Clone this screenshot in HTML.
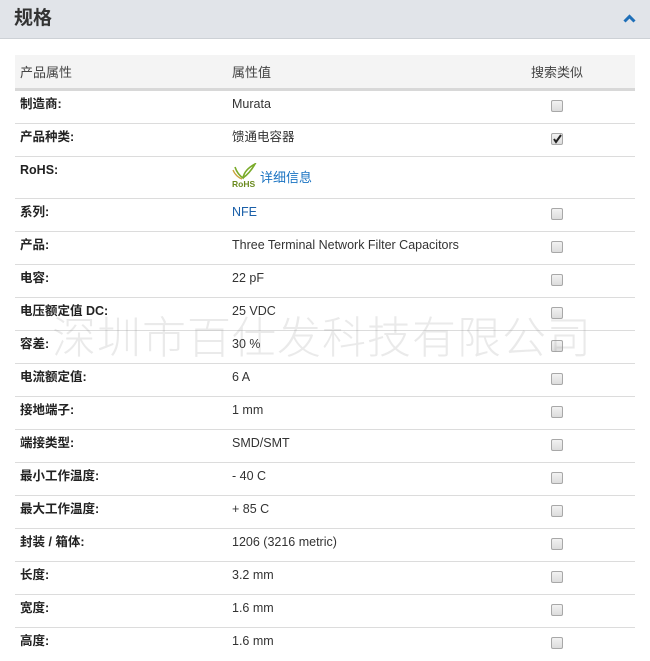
<!DOCTYPE html>
<html><head><meta charset="utf-8"><style>
*{margin:0;padding:0;box-sizing:border-box}
body{width:650px;height:650px;overflow:hidden;background:#fff;font-family:"Liberation Sans","Noto Sans CJK SC",sans-serif;position:relative;color:#333}
.hd{position:absolute;left:0;top:0;width:650px;height:39px;background:#e1e4e9;border-bottom:1px solid #cdd1d6}
.hd h2{position:absolute;left:14px;top:6px;font-size:19px;line-height:26px;font-weight:bold;color:#333}
.th{position:absolute;left:15px;top:55px;width:620px;height:36px;background:#f4f4f4;border-bottom:3px solid #d8d8d8;font-size:13px;color:#444}
.th span{position:absolute;top:9px;line-height:18px}
.row{position:absolute;left:15px;width:620px;border-bottom:1px solid #dcdcdc;font-size:12.5px}
.row .k{position:absolute;left:5px;top:4px;line-height:18px;font-weight:bold;color:#222}
.row .v{position:absolute;left:217px;top:4px;line-height:18px;color:#333}
.cb{position:absolute;left:536px;top:9px;width:12px;height:12px;border:1px solid #a8a8a8;border-radius:2px;background:linear-gradient(#f2f2f2,#dcdcdc)}
.wm{position:absolute;left:52px;top:308px;font-size:44px;line-height:52px;color:rgba(150,150,150,0.2);letter-spacing:1px;font-family:"Noto Sans CJK SC",sans-serif;font-weight:300;white-space:nowrap}
.row a.v{color:#1a73c2;text-decoration:none}
</style></head><body>
<div class="hd"><h2>规格</h2>
<svg style="position:absolute;left:623px;top:14px" width="13" height="9" viewBox="0 0 13 9"><path d="M1.5 7.5L6.5 2.5L11.5 7.5" stroke="#1f6fb8" stroke-width="3" fill="none"/></svg></div>
<div class="th"><span style="left:5px">产品属性</span><span style="left:217px">属性值</span><span style="left:516px">搜索类似</span></div>

<div class="row" style="top:91px;height:33px"><span class="k">制造商:</span><span class="v">Murata</span><div class="cb"></div></div>
<div class="row" style="top:124px;height:33px"><span class="k">产品种类:</span><span class="v">馈通电容器</span><div class="cb"><svg width="10" height="10" style="position:absolute;left:0;top:0"><path d="M2 5L4 8L9 1" stroke="#222" stroke-width="2" fill="none"/></svg></div></div>
<div class="row" style="top:157px;height:42px"><span class="k">RoHS:</span>
<svg style="position:absolute;left:216px;top:6px" width="28" height="26" viewBox="0 0 28 26"><path d="M4 4C6 10 9 13 12 15C13 9 17 5 24 1C20 8 16 12 12 15" stroke="#7aab2a" stroke-width="1.6" fill="none"/><path d="M2 7C4 12 8 15 11 16" stroke="#c9a23a" stroke-width="1.3" fill="none"/><text x="1" y="24" font-size="8.5" font-weight="bold" fill="#6a8a1e" font-family="Liberation Sans">RoHS</text></svg>
<a class="v" style="left:245px;top:12px;font-size:13px">详细信息</a></div>
<div class="row" style="top:199px;height:33px"><span class="k">系列:</span><span class="v" style="color:#1a5fa8">NFE</span><div class="cb"></div></div>
<div class="row" style="top:232px;height:33px"><span class="k">产品:</span><span class="v">Three Terminal Network Filter Capacitors</span><div class="cb"></div></div>
<div class="row" style="top:265px;height:33px"><span class="k">电容:</span><span class="v">22 pF</span><div class="cb"></div></div>
<div class="row" style="top:298px;height:33px"><span class="k">电压额定值 DC:</span><span class="v">25 VDC</span><div class="cb"></div></div>
<div class="row" style="top:331px;height:33px"><span class="k">容差:</span><span class="v">30 %</span><div class="cb"></div></div>
<div class="row" style="top:364px;height:33px"><span class="k">电流额定值:</span><span class="v">6 A</span><div class="cb"></div></div>
<div class="row" style="top:397px;height:33px"><span class="k">接地端子:</span><span class="v">1 mm</span><div class="cb"></div></div>
<div class="row" style="top:430px;height:33px"><span class="k">端接类型:</span><span class="v">SMD/SMT</span><div class="cb"></div></div>
<div class="row" style="top:463px;height:33px"><span class="k">最小工作温度:</span><span class="v">- 40 C</span><div class="cb"></div></div>
<div class="row" style="top:496px;height:33px"><span class="k">最大工作温度:</span><span class="v">+ 85 C</span><div class="cb"></div></div>
<div class="row" style="top:529px;height:33px"><span class="k">封装 / 箱体:</span><span class="v">1206 (3216 metric)</span><div class="cb"></div></div>
<div class="row" style="top:562px;height:33px"><span class="k">长度:</span><span class="v">3.2 mm</span><div class="cb"></div></div>
<div class="row" style="top:595px;height:33px"><span class="k">宽度:</span><span class="v">1.6 mm</span><div class="cb"></div></div>
<div class="row" style="top:628px;height:33px;border:none"><span class="k">高度:</span><span class="v">1.6 mm</span><div class="cb"></div></div>
<div class="wm">深圳市百仕发科技有限公司</div>
</body></html>
